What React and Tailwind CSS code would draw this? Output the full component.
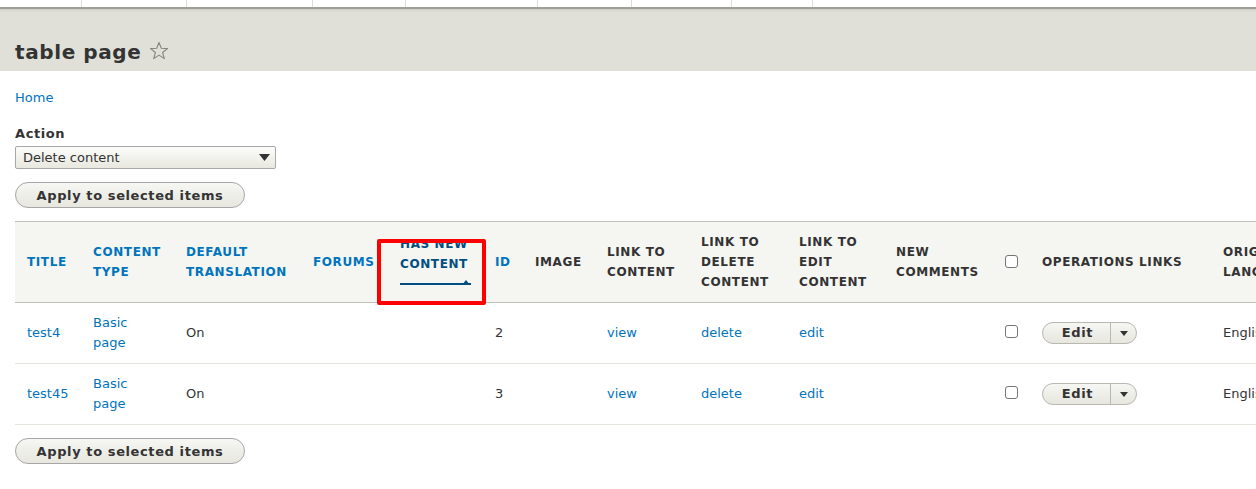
import React from "react";

const cols = [
  { label: "Title", w: "w-[66px]", link: true },
  { label: "Content type", w: "w-[93px]", link: true },
  { label: "Default translation", w: "w-[127px]", link: true },
  { label: "Forums", w: "w-[87px]", link: true },
  { label: "Has new content", w: "w-[95px]", active: true },
  { label: "ID", w: "w-[40px]", link: true },
  { label: "Image", w: "w-[72px]" },
  { label: "Link to content", w: "w-[94px]" },
  { label: "Link to delete content", w: "w-[98px]" },
  { label: "Link to edit content", w: "w-[97px]" },
  { label: "New comments", w: "w-[109px]" },
  { label: "", w: "w-[37px]", check: true },
  { label: "Operations links", w: "w-[181px]" },
  { label: "Original language", w: "w-[120px]" },
];

const rows = [
  { title: "test4", id: 2 },
  { title: "test45", id: 3 },
];

function Checkbox() {
  return (
    <span className="block w-[13px] h-[13px] rounded-[3px] border border-[#767676] bg-white" />
  );
}

function ApplyButton() {
  return (
    <button className="h-[26px] w-[230px] rounded-full border border-[#a6a6a6] bg-gradient-to-b from-[#f6f6f3] to-[#e7e7df] text-[13px] font-bold tracking-[0.6px] text-[#333] leading-none">
      Apply to selected items
    </button>
  );
}

function EditButton() {
  return (
    <div className="flex h-[22px] w-[95px] rounded-full border border-[#b8b8b0] bg-gradient-to-b from-[#f6f6f3] to-[#e7e7df] overflow-hidden">
      <span className="flex-1 flex items-center justify-center text-[13px] font-bold tracking-[0.6px] text-[#333] border-r border-[#b8b8b0] pl-[2px]">
        Edit
      </span>
      <span className="w-[25px] flex items-center justify-center">
        <svg width="8" height="5" viewBox="0 0 8 5">
          <polygon points="0,0 8,0 4,5" fill="#333" />
        </svg>
      </span>
    </div>
  );
}

export default function App() {
  return (
    <div className="relative w-[1256px] h-[489px] overflow-hidden bg-white font-['DejaVu_Sans',sans-serif] text-[13px] text-[#333] leading-[20px]">
      {/* toolbar strip */}
      <div className="flex h-[7px] bg-white">
        {[82, 105, 126, 93, 132, 94, 100, 81].map((w, i) => (
          <div key={i} className="border-r border-[#dcdcdc]" style={{ width: w }} />
        ))}
      </div>
      <div className="h-[2px] bg-[#9e9e98]" />
      <div className="bg-gradient-to-b from-[#cfcfc7] via-[#e0e0d8] to-[#e0e0d8] bg-[length:100%_6px] bg-no-repeat bg-[#e0e0d8] pl-[15px] pt-[31px] pb-[7px]">
        <h1 className="flex items-center text-[20px] font-bold tracking-[0.6px] leading-[24px] text-[#333]">
          table page
          <svg className="ml-[8px] mt-[-2px]" width="20" height="20" viewBox="0 0 20 20">
            <polygon
              points="10,1.5 12.3,7.3 18.5,7.6 13.6,11.5 15.3,17.6 10,14.1 4.7,17.6 6.4,11.5 1.5,7.6 7.7,7.3"
              fill="none"
              stroke="#86867c"
              strokeWidth="1.1"
              strokeLinejoin="round"
            />
          </svg>
        </h1>
      </div>

      <div className="pl-[15px]">
        <a className="block mt-[17px] text-[#0074bd]">Home</a>

        <div className="mt-[16px] font-bold tracking-[0.6px]">Action</div>
        <div className="mt-[2px] flex items-center justify-between w-[261px] h-[23px] rounded-[2px] border border-[#a8a8a8] bg-gradient-to-b from-[#fcfcfa] to-[#e8e8e0] pl-[7px] pr-[5px]">
          <span>Delete content</span>
          <svg width="11" height="7" viewBox="0 0 11 7">
            <polygon points="0,0 11,0 5.5,7" fill="#333" />
          </svg>
        </div>

        <div className="mt-[13px]">
          <ApplyButton />
        </div>

        <table className="mt-[13px] table-fixed border-collapse w-[1316px]">
          <colgroup>
            {cols.map((c, i) => (
              <col key={i} className={c.w} />
            ))}
          </colgroup>
          <thead>
            <tr className="bg-[#f5f5f2] border-t border-b border-[#bfbfba]">
              {cols.map((c, i) => (
                <th
                  key={i}
                  className={
                    "px-[12px] py-[10px] text-left align-middle uppercase text-[12px] font-bold tracking-[0.6px] leading-[20px] " +
                    (c.link ? "text-[#0074bd]" : c.active ? "text-[#004f80]" : "text-[#333]")
                  }
                >
                  {c.check ? (
                    <span className="block -mt-[2px]">
                      <Checkbox />
                    </span>
                  ) : c.active ? (
                    <div className="relative mb-[5px] pb-[9px] border-b-2 border-[#004f80]">
                      {c.label}
                      <svg className="absolute right-[1px] bottom-[-2px]" width="8" height="5" viewBox="0 0 8 5">
                        <polygon points="4,0 8,5 0,5" fill="#004f80" />
                      </svg>
                    </div>
                  ) : (
                    c.label
                  )}
                </th>
              ))}
            </tr>
          </thead>
          <tbody>
            {rows.map((r) => (
              <tr key={r.id} className="border-b border-[#e6e4df]">
                <td className="px-[12px] py-[10px] align-middle text-[#0074bd]">{r.title}</td>
                <td className="px-[12px] py-[10px] align-middle text-[#0074bd]">Basic page</td>
                <td className="px-[12px] py-[10px] align-middle">On</td>
                <td className="px-[12px] py-[10px]" />
                <td className="px-[12px] py-[10px]" />
                <td className="px-[12px] py-[10px] align-middle">{r.id}</td>
                <td className="px-[12px] py-[10px]" />
                <td className="px-[12px] py-[10px] align-middle text-[#0074bd]">view</td>
                <td className="px-[12px] py-[10px] align-middle text-[#0074bd]">delete</td>
                <td className="px-[12px] py-[10px] align-middle text-[#0074bd]">edit</td>
                <td className="px-[12px] py-[10px]" />
                <td className="px-[12px] py-[10px] align-middle">
                  <span className="block -mt-[4px]">
                    <Checkbox />
                  </span>
                </td>
                <td className="px-[12px] py-[10px] align-middle">
                  <EditButton />
                </td>
                <td className="px-[12px] py-[10px] align-middle">English</td>
              </tr>
            ))}
          </tbody>
        </table>

        <div className="mt-[13px]">
          <ApplyButton />
        </div>
      </div>

      {/* annotation box */}
      <div className="absolute left-[377px] top-[239px] w-[109px] h-[66px] border-[4px] border-[#ff0000] rounded-[2px]" />
    </div>
  );
}
